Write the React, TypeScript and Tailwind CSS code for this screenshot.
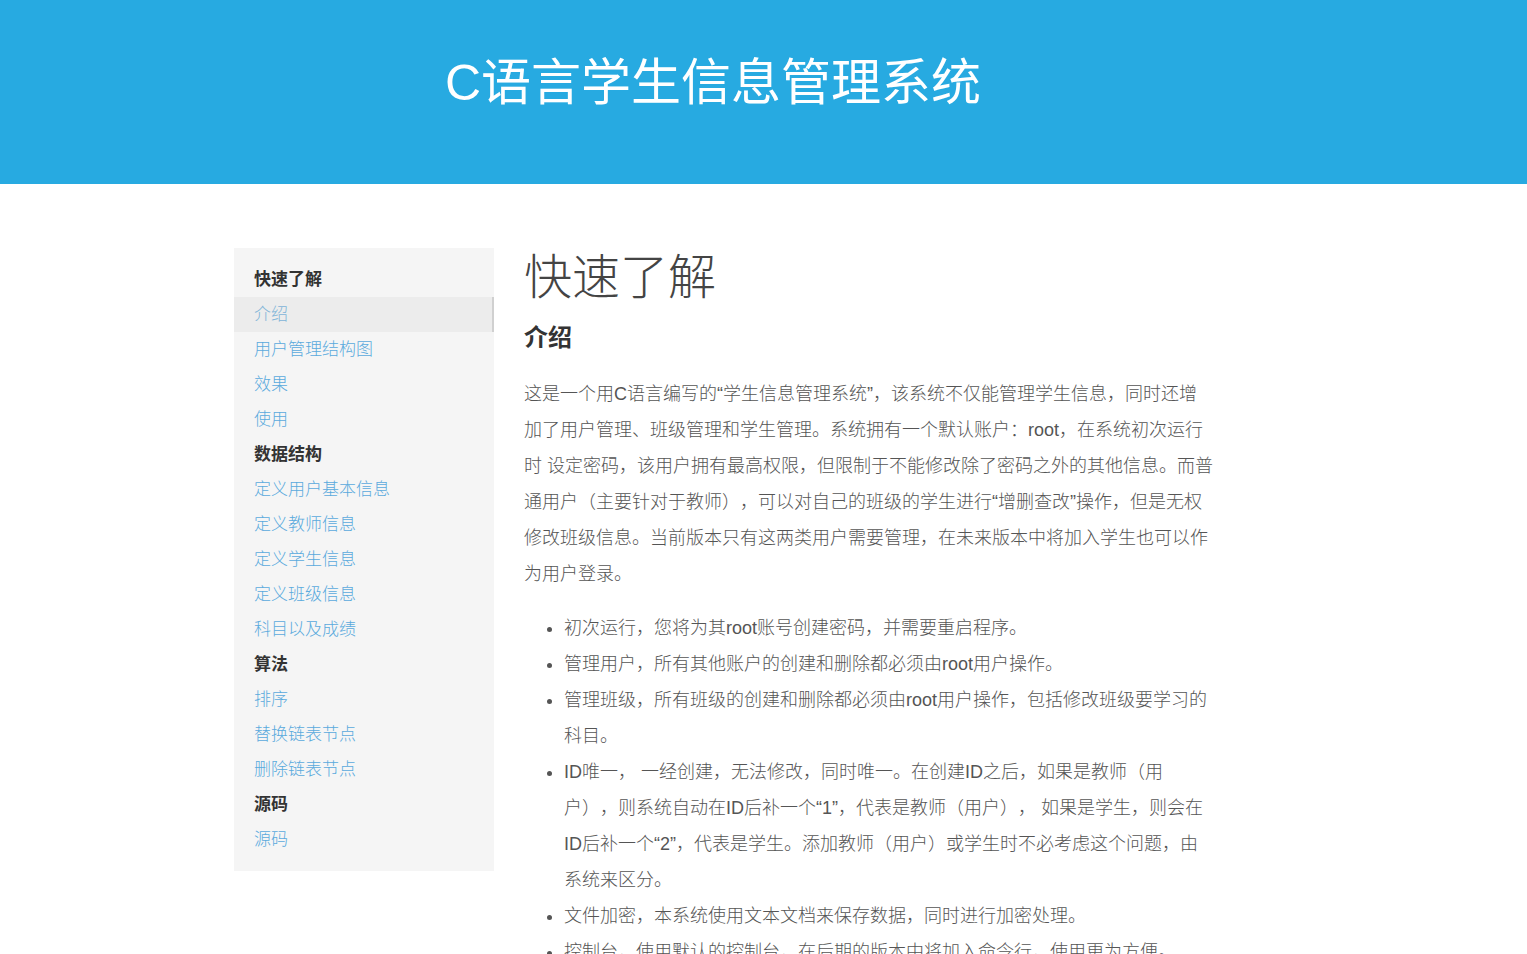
const NAV: { label: string; heading?: boolean; active?: boolean }[] = [
  { label: "快速了解", heading: true },
  { label: "介绍", active: true },
  { label: "用户管理结构图" },
  { label: "效果" },
  { label: "使用" },
  { label: "数据结构", heading: true },
  { label: "定义用户基本信息" },
  { label: "定义教师信息" },
  { label: "定义学生信息" },
  { label: "定义班级信息" },
  { label: "科目以及成绩" },
  { label: "算法", heading: true },
  { label: "排序" },
  { label: "替换链表节点" },
  { label: "删除链表节点" },
  { label: "源码", heading: true },
  { label: "源码" },
];

const FEATURES = [
  "初次运行，您将为其root账号创建密码，并需要重启程序。",
  "管理用户，所有其他账户的创建和删除都必须由root用户操作。",
  "管理班级，所有班级的创建和删除都必须由root用户操作，包括修改班级要学习的科目。",
  "ID唯一， 一经创建，无法修改，同时唯一。在创建ID之后，如果是教师（用户），则系统自动在ID后补一个“1”，代表是教师（用户）， 如果是学生，则会在ID后补一个“2”，代表是学生。添加教师（用户）或学生时不必考虑这个问题，由系统来区分。",
  "文件加密，本系统使用文本文档来保存数据，同时进行加密处理。",
  "控制台，使用默认的控制台，在后期的版本中将加入命令行，使用更为方便。",
];

const FONT = "font-['Liberation_Sans','Noto_Sans_CJK_SC',sans-serif]";

function Sidebar() {
  return (
    <nav className="w-[260px] shrink-0 self-start bg-[#f5f5f5] py-[14px]">
      {NAV.map((item, i) =>
        item.heading ? (
          <div key={i} className="flex h-[35px] items-center px-5 text-[17px] font-bold text-[#333]">
            {item.label}
          </div>
        ) : (
          <a
            key={i}
            href="#"
            className={
              item.active
                ? "flex h-[35px] items-center border-r-2 border-[#d0d0d0] bg-[#ececec] px-5 text-[17px] font-light text-[#7fb4d8]"
                : "flex h-[35px] items-center px-5 text-[17px] font-light text-[#5aaadd]"
            }
          >
            {item.label}
          </a>
        )
      )}
    </nav>
  );
}

export default function App() {
  return (
    <div className={`min-h-screen bg-white [text-spacing-trim:space-all] ${FONT}`}>
      <header className="flex h-[184px] items-center bg-[#27aae1] pl-[445px]">
        <h1 className="pb-[18px] text-[50px] font-normal text-white">C语言学生信息管理系统</h1>
      </header>

      <main className="flex gap-[30px] pl-[234px] pt-16">
        <Sidebar />
        <article className="w-[689px] text-[#555]">
          <h1 className="mt-[1px] text-[48px] leading-[58px] font-light text-[#444]">快速了解</h1>
          <h2 className="mt-[13px] text-[24px] leading-[36px] font-bold text-[#333]">介绍</h2>
          <p className="mt-[20px] text-[18px] leading-[36px] font-light">
            这是一个用C语言编写的“学生信息管理系统”，该系统不仅能管理学生信息，同时还增加了用户管理、班级管理和学生管理。系统拥有一个默认账户：root，在系统初次运行时 设定密码，该用户拥有最高权限，但限制于不能修改除了密码之外的其他信息。而普通用户（主要针对于教师），可以对自己的班级的学生进行“增删查改”操作，但是无权修改班级信息。当前版本只有这两类用户需要管理，在未来版本中将加入学生也可以作为用户登录。
          </p>
          <ul className="mt-[18px] list-disc pl-[40px] text-[18px] leading-[36px] font-light">
            {FEATURES.map((f, i) => (
              <li key={i}>{f}</li>
            ))}
          </ul>
        </article>
      </main>
    </div>
  );
}
